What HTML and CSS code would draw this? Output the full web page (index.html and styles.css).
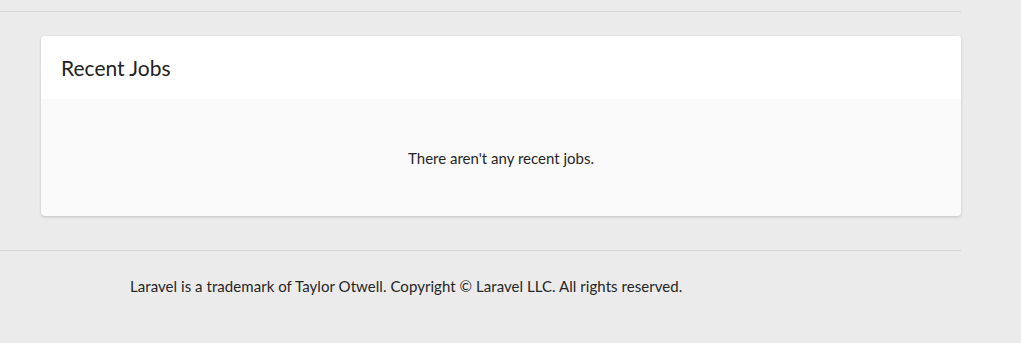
FILE: index.html
```html
<!DOCTYPE html>
<html lang="en">
<head>
<meta charset="utf-8">
<title>Recent Jobs</title>
<link rel="stylesheet" href="styles.css">
</head>
<body>
<div class="page">
  <div class="topbar"></div>
  <main class="main">
    <section class="card">
      <div class="card-header">
        <h2 class="card-title">Recent Jobs</h2>
      </div>
      <div class="card-body">
        <p class="empty">There aren't any recent jobs.</p>
      </div>
    </section>
  </main>
  <footer class="footer">
    <p class="footer-text">Laravel is a trademark of Taylor Otwell. Copyright © Laravel LLC. All rights reserved.</p>
  </footer>
</div>
</body>
</html>
```

FILE: styles.css
```css
html, body {
  margin: 0;
  padding: 0;
  background: #ebebeb;
  font-family: Lato, "Liberation Sans", sans-serif;
  color: #2f2f2f;
}
.page {
  width: 961px;
}
.topbar {
  height: 11px;
  border-bottom: 1px solid #d6d6d6;
}
.main {
  padding: 24px 0 0 41px;
}
.card {
  background: #fafafa;
  border-radius: 4px;
  box-shadow: 0 1px 3px rgba(0, 0, 0, 0.18);
  overflow: hidden;
}
.card-header {
  background: #fff;
  height: 63px;
  display: flex;
  align-items: center;
  padding: 0 20px;
}
.card-title {
  margin: 0;
  font-size: 21px;
  font-weight: 400;
  color: #222;
}
.card-body {
  height: 117px;
  display: flex;
  align-items: center;
  justify-content: center;
}
.empty {
  margin: 0;
  font-size: 15px;
  color: #262626;
}
.footer {
  margin-top: 34px;
  border-top: 1px solid #d6d6d6;
  padding: 26px 0 0 130px;
}
.footer-text {
  margin: 0;
  font-size: 15px;
  letter-spacing: 0.05px;
  color: #262626;
}
```
